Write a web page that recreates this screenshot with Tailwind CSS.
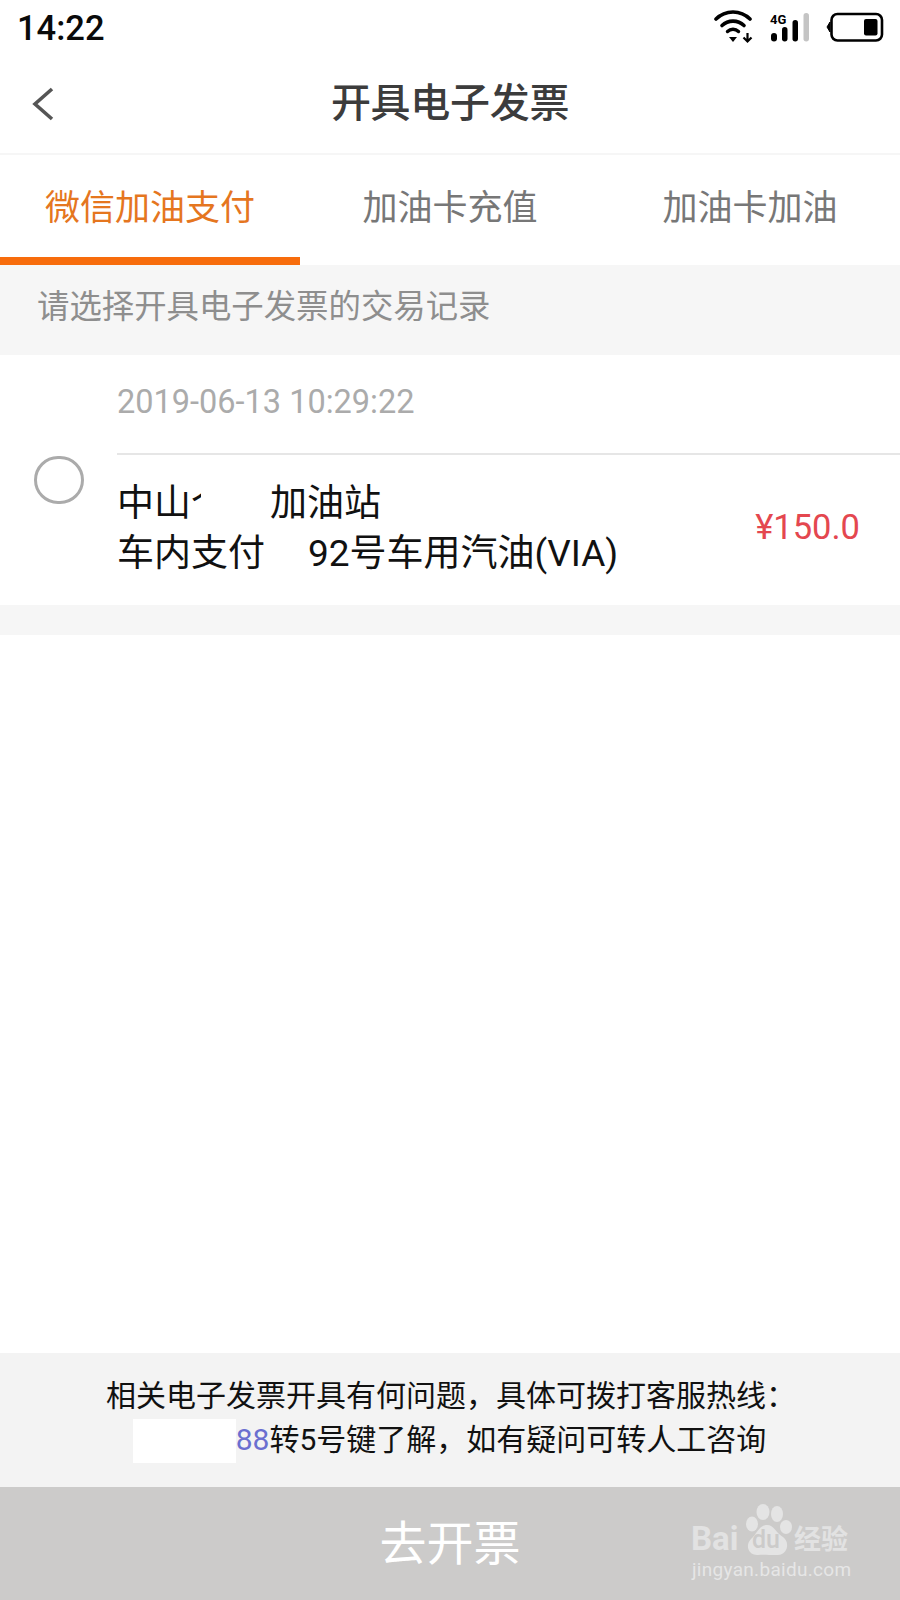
<!DOCTYPE html>
<html lang="zh-CN">
<head>
<meta charset="utf-8">
<script src="https://cdn.jsdelivr.net/npm/@tailwindcss/browser@4"></script>
<title>开具电子发票</title>
</head>
<body class="bg-white">
<div class="w-[900px] h-[1600px] flex flex-col bg-white overflow-hidden font-['Roboto','Noto_Sans_CJK_SC',sans-serif]">

  <!-- status bar -->
  <div class="h-[55px] shrink-0 flex items-center justify-between pl-[17px] pr-[16px]">
    <span class="text-[34.500px] font-medium leading-none text-[#0a0a0a] mt-[1px]">14:22</span>
    <svg class="w-[170px] h-[55px] shrink-0" viewBox="714 0 170 55" fill="none">
      <path d="M716 19 A24 24 0 0 1 750 19" stroke="#000" stroke-width="3.6" stroke-linecap="round"/>
      <path d="M722 25.5 A16 16 0 0 1 744 25.5" stroke="#000" stroke-width="3.6" stroke-linecap="round"/>
      <path d="M727.5 31.5 A8 8 0 0 1 738.5 31.5" stroke="#000" stroke-width="3.4" stroke-linecap="round"/>
      <path d="M729 37h8l-4 5z" fill="#000"/>
      <path d="M747.5 33v7M743.5 37.5l4 4 4-4" stroke="#000" stroke-width="2.2"/>
      <text x="770" y="24" font-family="Roboto" font-weight="700" font-size="13" fill="#000">4G</text>
      <rect x="771" y="33" width="6" height="8.5" rx="3" fill="#000"/>
      <rect x="782" y="27" width="5.5" height="14.5" rx="2.7" fill="#000"/>
      <rect x="792.5" y="20" width="5.5" height="21.5" rx="2.7" fill="#000"/>
      <rect x="803.5" y="13" width="5.5" height="28.5" rx="2.7" fill="#c4c4c4"/>
      <path d="M830 22 L827 27 L830 32z" fill="#000" stroke="#000" stroke-width="1"/>
      <rect x="831.5" y="14" width="50.5" height="26.5" rx="6" stroke="#000" stroke-width="2.6"/>
      <rect x="864" y="19" width="13.5" height="16.5" rx="2" fill="#000"/>
    </svg>
  </div>

  <!-- nav -->
  <div class="relative h-[100px] shrink-0 flex items-center justify-center border-b-2 border-[#f6f6f6]">
    <svg class="absolute left-[30px] top-[31px] w-[26px] h-[36px]" viewBox="0 0 26 36" fill="none">
      <path d="M22 3 L5 18 L22 33" stroke="#555" stroke-width="3.6" stroke-linejoin="miter"/>
    </svg>
    <h1 class="text-[40px] font-medium leading-none text-[#3c3c3c] tracking-[-0.3px]">开具电子发票</h1>
  </div>

  <!-- tabs -->
  <div class="grid grid-cols-3 h-[110px] shrink-0">
    <div class="flex items-center justify-center pt-[4px] border-b-[8px] border-[#f76c0c] text-[35px] text-[#e5761f] leading-none">微信加油支付</div>
    <div class="flex items-center justify-center pt-[4px] border-b-[8px] border-transparent text-[35px] text-[#777] leading-none">加油卡充值</div>
    <div class="flex items-center justify-center pt-[4px] border-b-[8px] border-transparent text-[35px] text-[#777] leading-none">加油卡加油</div>
  </div>

  <!-- hint -->
  <div class="h-[90px] shrink-0 bg-[#f6f6f6] flex items-center pl-[37px] pb-[5px] text-[32.4px] text-[#8e8e8e] leading-none">请选择开具电子发票的交易记录</div>

  <!-- record -->
  <div class="h-[250px] shrink-0 flex bg-white">
    <div class="w-[117px] shrink-0 pl-[34px] pt-[101px]">
      <div class="w-[50px] h-[48px] rounded-full border-[3px] border-[#ababab]"></div>
    </div>
    <div class="flex-1 flex flex-col">
      <div class="h-[100px] shrink-0 border-b-2 border-[#e6e6e6] pt-[29px] text-[32.500px] leading-[36px] text-[#ababab]">2019-06-13 10:29:22</div>
      <div class="flex-1 flex items-start justify-between pr-[40px]">
        <div class="relative mt-[24px] text-[37px] leading-[50px] text-[#111]">
          <div class="whitespace-pre">中山个<span class="inline-block w-[42px]"></span>加油站</div>
          <div class="whitespace-pre">车内支付<span class="inline-block w-[43px]"></span>92号车用汽油(VIA)</div>
          <div class="absolute left-[84px] top-[0px] w-[66px] h-[46px] bg-white"></div>
        </div>
        <div class="mt-[51px] text-[34.500px] leading-[42px] text-[#e4474f]">¥150.0</div>
      </div>
    </div>
  </div>

  <!-- gap -->
  <div class="h-[30px] shrink-0 bg-[#f6f6f6]"></div>

  <div class="flex-1 bg-white"></div>

  <!-- footer note -->
  <div class="h-[134px] shrink-0 bg-[#f3f3f3] flex flex-col items-center pt-[21px] text-[30px] leading-[43px] text-[#111]">
    <div class="ml-[2px]">相关电子发票开具有何问题，具体可拨打客服热线：</div>
    <div class="flex ml-[-1px] mt-[1px]"><span class="w-[103px] h-[44px] mt-[1px] bg-white shrink-0"></span><span class="text-[#6a6fd0]">88</span><span>转5号键了解，如有疑问可转人工咨询</span></div>
  </div>

  <!-- action -->
  <div class="relative h-[113px] shrink-0 bg-[#cccbca] flex items-center justify-center">
    <span class="text-[47px] leading-none text-white">去开票</span>
    <!-- watermark -->
    <svg class="absolute left-[745px] top-[14px] w-[60px] h-[56px]" viewBox="745 1501 60 56">
      <g fill="#e4e4e4">
        <ellipse cx="763" cy="1512" rx="6.5" ry="8"/>
        <ellipse cx="777" cy="1514" rx="6" ry="8"/>
        <ellipse cx="752" cy="1524" rx="6" ry="7.5"/>
        <ellipse cx="786" cy="1527" rx="6" ry="7"/>
        <path d="M767 1525 C774 1525 776 1533 783 1537 C790 1542 788 1554 778 1555 C772 1555.500 764 1554 758 1555 C748 1555.500 745 1545 751 1539 C757 1534 759 1525 767 1525z"/>
      </g>
    </svg>
    <span class="absolute left-[691px] top-[33px] text-[33px] leading-[38px] font-bold text-[#e2e2e2]">Bai</span>
    <span class="absolute left-[752px] top-[40px] text-[25px] leading-[26px] font-medium text-[#cccbca]">du</span>
    <span class="absolute left-[794px] top-[38px] text-[27px] leading-[30px] font-bold text-[#e2e2e2]">经验</span>
    <span class="absolute left-[692px] top-[71px] text-[19px] leading-[24px] tracking-[0.3px] text-[#e6e6e6]">jingyan.baidu.com</span>
  </div>
</div>
</body>
</html>
